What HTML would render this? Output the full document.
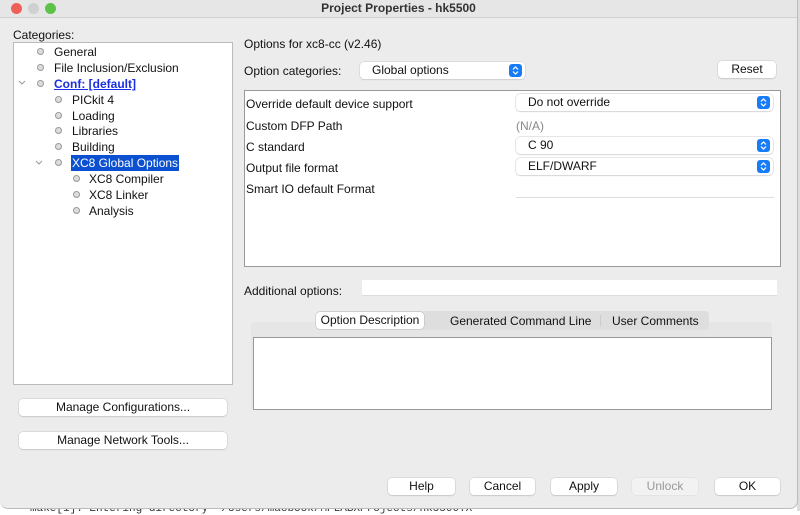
<!DOCTYPE html>
<html><head><style>
body{margin:0;width:800px;height:511px;overflow:hidden;background:#fff;font-family:"Liberation Sans",sans-serif;font-size:12px;color:#111;position:relative}
.a{position:absolute;white-space:nowrap}
.win{position:absolute;left:0;top:0;width:797px;height:508px;background:#ececec;border-radius:0 0 8px 8px;border-right:1px solid #bbb;border-bottom:1px solid #bbb;overflow:hidden}
.title{position:absolute;left:0;top:0;width:797px;height:17px;background:#e6e6e6;border-bottom:1px solid #d0d0d0;text-align:center;font-weight:bold;font-size:12px;line-height:17px;color:#333}
.dot{position:absolute;top:3px;width:11px;height:11px;border-radius:50%}
.btn{position:absolute;background:#fff;border-radius:4px;box-shadow:0 0 0 .5px #c8c8c8,0 1px 1px rgba(0,0,0,.15);text-align:center;line-height:17px;height:17px;font-size:12px}
.b{position:absolute;width:5px;height:5px;border-radius:50%;border:1px solid #999;background:#ddd}
.combo{position:absolute;background:#fff;border-radius:4px;box-shadow:0 0 0 .5px #ccc,0 1px 1px rgba(0,0,0,.12);height:17px;line-height:17px;padding-left:12px;box-sizing:border-box}
.arr{position:absolute;right:3px;top:2px;width:13px;height:13px;border-radius:3px;background:#1a7cf5}
.arr svg{display:block}
</style></head><body>
<div class="a" style="left:797px;top:0;width:3px;height:511px;background:#ddd"></div>
<div class="a" style="left:30px;top:503px;font-family:'Liberation Mono';font-size:11px;color:#333">make[1]: Entering directory '/Users/macbook/MPLABXProjects/hk5500.X'</div>
<div class="win">
<div class="title">Project Properties - hk5500</div>
<div class="dot" style="left:11px;background:#ee5f57"></div>
<div class="dot" style="left:28px;background:#d0d0d0"></div>
<div class="dot" style="left:45px;background:#5cc348"></div>

<div class="a" style="left:13px;top:28px">Categories:</div>
<div class="a" style="left:13px;top:42px;width:218px;height:341px;background:#fff;border:1px solid #bbb"></div>
<div class="a" style="left:54px;top:45px">General</div><div class="b" style="left:37px;top:48px"></div>
<div class="a" style="left:54px;top:61px">File Inclusion/Exclusion</div><div class="b" style="left:37px;top:64px"></div>
<svg class="a" style="left:18px;top:80px" width="8" height="5"><path d="M1 1L4 4L7 1" fill="none" stroke="#999"/></svg>
<div class="a" style="left:54px;top:77px;color:#1a2fe0;font-weight:bold;text-decoration:underline">Conf: [default]</div><div class="b" style="left:37px;top:80px"></div>
<div class="a" style="left:72px;top:93px">PICkit 4</div><div class="b" style="left:55px;top:96px"></div>
<div class="a" style="left:72px;top:109px">Loading</div><div class="b" style="left:55px;top:112px"></div>
<div class="a" style="left:72px;top:124px">Libraries</div><div class="b" style="left:55px;top:127px"></div>
<div class="a" style="left:72px;top:140px">Building</div><div class="b" style="left:55px;top:143px"></div>
<svg class="a" style="left:35px;top:160px" width="8" height="5"><path d="M1 1L4 4L7 1" fill="none" stroke="#999"/></svg>
<div class="a" style="left:71px;top:155px;background:#0b50d0;color:#fff;padding:0 1px;height:16px;line-height:16px">XC8 Global Options</div><div class="b" style="left:55px;top:159px"></div>
<div class="a" style="left:89px;top:172px">XC8 Compiler</div><div class="b" style="left:73px;top:175px"></div>
<div class="a" style="left:89px;top:188px">XC8 Linker</div><div class="b" style="left:73px;top:191px"></div>
<div class="a" style="left:89px;top:204px">Analysis</div><div class="b" style="left:73px;top:207px"></div>

<div class="btn" style="left:19px;top:399px;width:208px">Manage Configurations...</div>
<div class="btn" style="left:19px;top:432px;width:208px">Manage Network Tools...</div>

<div class="a" style="left:244px;top:37px">Options for xc8-cc (v2.46)</div>
<div class="a" style="left:244px;top:64px">Option categories:</div>
<div class="combo" style="left:360px;top:62px;width:165px">Global options<div class="arr"><svg width="13" height="13"><path d="M4 5.5L6.5 3L9 5.5M4 7.5L6.5 10L9 7.5" fill="none" stroke="#fff" stroke-width="1.2"/></svg></div></div>
<div class="btn" style="left:718px;top:61px;width:58px">Reset</div>

<div class="a" style="left:244px;top:90px;width:535px;height:175px;background:#fff;border:1px solid #999"></div>
<div class="a" style="left:246px;top:97px">Override default device support</div>
<div class="combo" style="left:516px;top:94px;width:257px">Do not override<div class="arr"><svg width="13" height="13"><path d="M4 5.5L6.5 3L9 5.5M4 7.5L6.5 10L9 7.5" fill="none" stroke="#fff" stroke-width="1.2"/></svg></div></div>
<div class="a" style="left:246px;top:119px">Custom DFP Path</div>
<div class="a" style="left:516px;top:119px;color:#888">(N/A)</div>
<div class="a" style="left:246px;top:140px">C standard</div>
<div class="combo" style="left:516px;top:137px;width:257px">C 90<div class="arr"><svg width="13" height="13"><path d="M4 5.5L6.5 3L9 5.5M4 7.5L6.5 10L9 7.5" fill="none" stroke="#fff" stroke-width="1.2"/></svg></div></div>
<div class="a" style="left:246px;top:161px">Output file format</div>
<div class="combo" style="left:516px;top:158px;width:257px">ELF/DWARF<div class="arr"><svg width="13" height="13"><path d="M4 5.5L6.5 3L9 5.5M4 7.5L6.5 10L9 7.5" fill="none" stroke="#fff" stroke-width="1.2"/></svg></div></div>
<div class="a" style="left:246px;top:182px">Smart IO default Format</div>
<div class="a" style="left:516px;top:179px;width:258px;height:18px;border-bottom:1px solid #ddd;background:#fff"></div>

<div class="a" style="left:244px;top:284px">Additional options:</div>
<div class="a" style="left:362px;top:280px;width:415px;height:15px;background:#fff;border-bottom:1px solid #ddd"></div>

<div class="a" style="left:251px;top:322px;width:521px;height:88px;background:#e6e6e6;border-radius:4px"></div>
<div class="a" style="left:316px;top:311px;width:393px;height:19px;background:#dedede;border-radius:4px"></div>
<div class="a" style="left:316px;top:312px;width:108px;height:17px;background:#fff;border-radius:4px;box-shadow:0 0 0 .5px #bbb;text-align:center;line-height:17px">Option Description</div>
<div class="a" style="left:450px;top:314px">Generated Command Line</div>
<div class="a" style="left:600px;top:315px;width:1px;height:11px;background:#ccc"></div>
<div class="a" style="left:612px;top:314px">User Comments</div>
<div class="a" style="left:253px;top:337px;width:517px;height:71px;background:#fff;border:1px solid #999"></div>

<div class="btn" style="left:388px;top:478px;width:67px">Help</div>
<div class="btn" style="left:470px;top:478px;width:65px">Cancel</div>
<div class="btn" style="left:551px;top:478px;width:66px">Apply</div>
<div class="btn" style="left:632px;top:478px;width:66px;background:#f2f2f2;color:#999;box-shadow:0 0 0 .5px #ddd">Unlock</div>
<div class="btn" style="left:715px;top:478px;width:65px">OK</div>
</div>
</body></html>
